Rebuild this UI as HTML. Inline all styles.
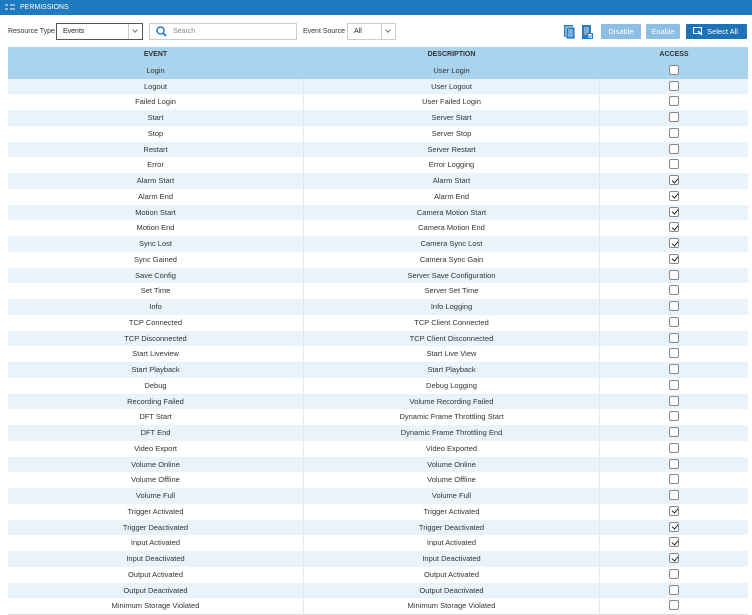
<!DOCTYPE html>
<html><head><meta charset="utf-8"><style>
*{box-sizing:border-box;margin:0;padding:0}
body{width:752px;height:615px;background:#fff;font-family:"Liberation Sans",sans-serif;font-size:8px;color:#333;position:relative;overflow:hidden}
.tb{position:absolute;left:0;top:0;width:752px;height:15px;background:#1f7bbf;color:#fff;font-size:7px;line-height:15px;padding-left:20px}
.tb svg{position:absolute;left:5px;top:4px}
.lbl{position:absolute;top:28px;font-size:7px;color:#333}
.sel{position:absolute;border:1px solid #999;background:#fff;font-size:7px;line-height:15px;padding-left:6px;color:#222}
.sel .ar{position:absolute;right:0;top:0;width:14px;height:100%;border-left:1px solid #ccc}
.sel .ar:after{content:"";position:absolute;left:4px;top:4px;width:3px;height:3px;border-right:1px solid #777;border-bottom:1px solid #777;transform:rotate(45deg)}
.btn{position:absolute;top:24px;height:15px;color:#fff;font-size:7.5px;line-height:15px;text-align:center;border-radius:1px}
.tbl{position:absolute;left:8px;top:47px;width:740px;border-bottom:1px solid #ddd}
.r{display:flex;height:15.75px;line-height:15.75px;font-size:7.5px;color:#333;text-align:center}
.r>div{overflow:hidden;white-space:nowrap}
.r>div:nth-child(1){width:295px}
.r>div:nth-child(2){width:297px;border-left:1px solid #e2e8ee;border-right:1px solid #e2e8ee}
.r>div:nth-child(3){width:148px}
.hd{background:#aad4ee;font-weight:bold;font-size:7px}
.hd>div{border-color:transparent!important}
.h{background:#aad4ee}
.h>div{border-color:transparent!important}
.l{background:#e9f3fb}
.cb{display:inline-block;width:10px;height:10px;border:1px solid #888;border-radius:2px;background:#fff;vertical-align:middle;position:relative;margin-top:-2px}
.cb.c:after{content:"";position:absolute;left:2.5px;top:0.5px;width:3px;height:5px;border-right:1.5px solid #222;border-bottom:1.5px solid #222;transform:rotate(40deg)}
</style></head><body>
<div class="tb"><svg width="10" height="7" viewBox="0 0 10 7"><path d="M0 1h3M5 1h5M0 5h3M5 5h5" stroke="#fff" stroke-width="1" fill="none"/></svg>PERMISSIONS</div>
<div class="lbl" style="left:8px">Resource Type</div>
<div class="sel" style="left:56px;top:23px;width:87px;height:17px;border-color:#555">Events<div class="ar"></div></div>
<div class="sel" style="left:149px;top:23px;width:148px;height:17px;border-color:#ccc;padding-left:23px;color:#888">Search
<svg style="position:absolute;left:6px;top:2px" width="11" height="11" viewBox="0 0 11 11"><circle cx="4.5" cy="4.5" r="3.5" stroke="#2a7cc0" stroke-width="1.5" fill="none"/><path d="M7 7l3 3" stroke="#2a7cc0" stroke-width="1.8"/></svg></div>
<div class="lbl" style="left:303px">Event Source</div>
<div class="sel" style="left:347px;top:23px;width:49px;height:17px;border-color:#ccc">All<div class="ar"></div></div>
<svg style="position:absolute;left:564px;top:25px" width="11" height="14" viewBox="0 0 11 14"><rect x="0" y="0" width="9" height="12" fill="#2a7cc0"/><rect x="2" y="2" width="9" height="12" fill="#2a7cc0" stroke="#fff" stroke-width=".8"/><path d="M4 5h5M4 7h5M4 9h5M4 11h5" stroke="#fff" stroke-width=".8"/></svg>
<svg style="position:absolute;left:582px;top:25px" width="11" height="14" viewBox="0 0 11 14"><rect x="0" y="0" width="9" height="14" fill="#2a7cc0"/><path d="M2 3h5M2 5h5M2 7h5M2 9h3" stroke="#fff" stroke-width=".8"/><rect x="6" y="8.5" width="4.5" height="5" fill="#fff" stroke="#2a7cc0"/><path d="M7 11l1.3 1.3 1.7-2.6" stroke="#2a7cc0" fill="none" stroke-width=".8"/></svg>
<div class="btn" style="left:601px;width:40px;background:#8cbfe3">Disable</div>
<div class="btn" style="left:646px;width:34px;background:#8cbfe3">Enable</div>
<div class="btn" style="left:686px;width:61px;background:#1f72b5;padding-left:12px">Select All
<svg style="position:absolute;left:7px;top:3px" width="10" height="9" viewBox="0 0 10 9"><rect x=".5" y=".5" width="8" height="6" fill="none" stroke="#fff"/><path d="M5 4l4 4" stroke="#fff" stroke-width="1.5"/></svg></div>
<div class="tbl">
<div class="r hd"><div>EVENT</div><div>DESCRIPTION</div><div>ACCESS</div></div>
<div class="r h"><div>Login</div><div>User Login</div><div><span class="cb"></span></div></div>
<div class="r l"><div>Logout</div><div>User Logout</div><div><span class="cb"></span></div></div>
<div class="r"><div>Failed Login</div><div>User Failed Login</div><div><span class="cb"></span></div></div>
<div class="r l"><div>Start</div><div>Server Start</div><div><span class="cb"></span></div></div>
<div class="r"><div>Stop</div><div>Server Stop</div><div><span class="cb"></span></div></div>
<div class="r l"><div>Restart</div><div>Server Restart</div><div><span class="cb"></span></div></div>
<div class="r"><div>Error</div><div>Error Logging</div><div><span class="cb"></span></div></div>
<div class="r l"><div>Alarm Start</div><div>Alarm Start</div><div><span class="cb c"></span></div></div>
<div class="r"><div>Alarm End</div><div>Alarm End</div><div><span class="cb c"></span></div></div>
<div class="r l"><div>Motion Start</div><div>Camera Motion Start</div><div><span class="cb c"></span></div></div>
<div class="r"><div>Motion End</div><div>Camera Motion End</div><div><span class="cb c"></span></div></div>
<div class="r l"><div>Sync Lost</div><div>Camera Sync Lost</div><div><span class="cb c"></span></div></div>
<div class="r"><div>Sync Gained</div><div>Camera Sync Gain</div><div><span class="cb c"></span></div></div>
<div class="r l"><div>Save Config</div><div>Server Save Configuration</div><div><span class="cb"></span></div></div>
<div class="r"><div>Set Time</div><div>Server Set Time</div><div><span class="cb"></span></div></div>
<div class="r l"><div>Info</div><div>Info Logging</div><div><span class="cb"></span></div></div>
<div class="r"><div>TCP Connected</div><div>TCP Client Connected</div><div><span class="cb"></span></div></div>
<div class="r l"><div>TCP Disconnected</div><div>TCP Client Disconnected</div><div><span class="cb"></span></div></div>
<div class="r"><div>Start Liveview</div><div>Start Live View</div><div><span class="cb"></span></div></div>
<div class="r l"><div>Start Playback</div><div>Start Playback</div><div><span class="cb"></span></div></div>
<div class="r"><div>Debug</div><div>Debug Logging</div><div><span class="cb"></span></div></div>
<div class="r l"><div>Recording Failed</div><div>Volume Recording Failed</div><div><span class="cb"></span></div></div>
<div class="r"><div>DFT Start</div><div>Dynamic Frame Throttling Start</div><div><span class="cb"></span></div></div>
<div class="r l"><div>DFT End</div><div>Dynamic Frame Throttling End</div><div><span class="cb"></span></div></div>
<div class="r"><div>Video Export</div><div>Video Exported</div><div><span class="cb"></span></div></div>
<div class="r l"><div>Volume Online</div><div>Volume Online</div><div><span class="cb"></span></div></div>
<div class="r"><div>Volume Offline</div><div>Volume Offline</div><div><span class="cb"></span></div></div>
<div class="r l"><div>Volume Full</div><div>Volume Full</div><div><span class="cb"></span></div></div>
<div class="r"><div>Trigger Activated</div><div>Trigger Activated</div><div><span class="cb c"></span></div></div>
<div class="r l"><div>Trigger Deactivated</div><div>Trigger Deactivated</div><div><span class="cb c"></span></div></div>
<div class="r"><div>Input Activated</div><div>Input Activated</div><div><span class="cb c"></span></div></div>
<div class="r l"><div>Input Deactivated</div><div>Input Deactivated</div><div><span class="cb c"></span></div></div>
<div class="r"><div>Output Activated</div><div>Output Activated</div><div><span class="cb"></span></div></div>
<div class="r l"><div>Output Deactivated</div><div>Output Deactivated</div><div><span class="cb"></span></div></div>
<div class="r"><div>Minimum Storage Violated</div><div>Minimum Storage Violated</div><div><span class="cb"></span></div></div>
</div>
</body></html>
